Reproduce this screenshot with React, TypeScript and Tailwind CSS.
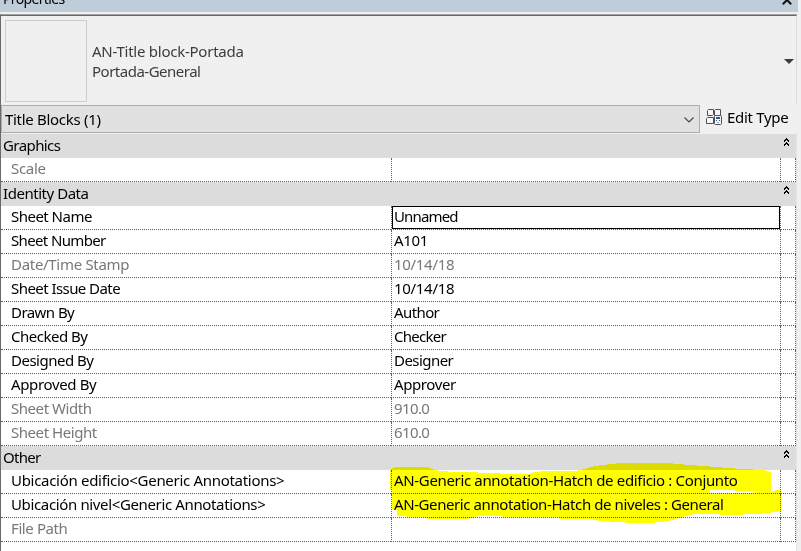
import { useState } from 'react'
import clsx from 'clsx'

type Property = {
  name: string;
  value?: string;
  muted?: boolean;
  nameClass?: string;
  valueClass?: string;
};

type Group = { title: string; titleClass?: string; items: Property[] };

const groups: Group[] = [
  {
    title: 'Graphics',
    titleClass: 'tracking-[-0.58px]',
    items: [{ name: 'Scale', muted: true }],
  },
  {
    title: 'Identity Data',
    titleClass: 'tracking-[-0.46px]',
    items: [
      { name: 'Sheet Name', value: 'Unnamed', nameClass: 'tracking-[-0.52px]', valueClass: 'tracking-[-0.85px]' },
      { name: 'Sheet Number', value: 'A101', nameClass: 'tracking-[-0.64px]' },
      { name: 'Date/Time Stamp', value: '10/14/18', muted: true },
      { name: 'Sheet Issue Date', value: '10/14/18', nameClass: 'tracking-[-0.56px]' },
      { name: 'Drawn By', value: 'Author', nameClass: 'tracking-[-0.55px]', valueClass: 'tracking-[-0.6px]' },
      { name: 'Checked By', value: 'Checker', nameClass: 'tracking-[-0.5px]', valueClass: 'tracking-[-0.75px]' },
      { name: 'Designed By', value: 'Designer', nameClass: 'tracking-[-0.5px]', valueClass: 'tracking-[-0.55px]' },
      { name: 'Approved By', value: 'Approver', nameClass: 'tracking-[-0.36px]', valueClass: 'tracking-[-0.4px]' },
      { name: 'Sheet Width', value: '910.0', muted: true, nameClass: 'tracking-[-0.45px]', valueClass: 'tracking-[-0.6px]' },
      { name: 'Sheet Height', value: '610.0', muted: true, nameClass: 'tracking-[-0.45px]', valueClass: 'tracking-[-0.6px]' },
    ],
  },
  {
    title: 'Other',
    titleClass: 'tracking-[-0.7px]',
    items: [
      {
        name: 'Ubicación edificio<Generic Annotations>',
        value: 'AN-Generic annotation-Hatch de edificio : Conjunto',
        valueClass: 'tracking-[-0.34px]',
      },
      {
        name: 'Ubicación nivel<Generic Annotations>',
        value: 'AN-Generic annotation-Hatch de niveles : General',
        nameClass: 'tracking-[-0.36px]',
        valueClass: 'tracking-[-0.41px]',
      },
      { name: 'File Path', muted: true, nameClass: 'tracking-[-0.4px]' },
    ],
  },
];

export default function App() {
  const [selected, setSelected] = useState('Sheet Name');

  return (
    <div className="relative flex h-[551px] w-[801px] flex-col overflow-hidden bg-[#f0f0f0] font-['Noto_Sans',sans-serif] text-[15px] leading-[24px] tracking-[-0.3px] text-black">
      <div className="flex h-3 w-[798px] shrink-0 items-end justify-between overflow-hidden bg-[#bfcddb]">
        <span className="mb-px ml-[3px] text-[14px] tracking-[-0.65px]">Properties</span>
        <svg className="mr-[6px] mb-[7px] shrink-0" width="10" height="10" viewBox="0 0 10 10" stroke="#111" strokeWidth="2">
          <path d="M0.8 0.8 9.2 9.2M9.2 0.8 0.8 9.2" />
        </svg>
      </div>
      <div className="mt-[2px] flex min-h-0 w-[797px] flex-1 flex-col border-t border-l border-t-[#a0a0a0] border-l-[#696969]">
        <TypeSelector />
        <div className="flex h-[29px] shrink-0">
          <div className="flex h-[28px] w-[699px] items-center justify-between border border-[#adadad] bg-[#e1e1e1] pr-[5px] pl-[3px]">
            <span>Title Blocks (1)</span>
            <svg className="mt-px" width="10" height="6" viewBox="0 0 10 6" fill="none" stroke="#444" strokeWidth="1.1">
              <path d="M0.5 0.5 5 5 9.5 0.5" />
            </svg>
          </div>
          <button className="flex h-[24px] items-center pl-[6px]">
            <EditTypeIcon />
            <span className="ml-[5px]">Edit Type</span>
          </button>
        </div>
        <div className="flex flex-1 flex-col border-r border-[#e3e3e3] bg-white">
          {groups.map((g) => (
            <div key={g.title}>
              <div className="flex h-6 justify-between bg-[#dcdcdc] pr-[7px] pl-[2px] leading-[22px]">
                <span className={g.titleClass}>{g.title}</span>
                <CollapseIcon />
              </div>
              {g.items.map((p) => (
                <PropertyRow key={p.name} item={p} selected={p.name === selected} onSelect={() => setSelected(p.name)} />
              ))}
            </div>
          ))}
        </div>
      </div>
      <Highlight />
    </div>
  );
}

function TypeSelector() {
  return (
    <div className="flex h-[90px] shrink-0 items-start border-t border-r border-t-[#696969] border-r-[#dcdcdc] text-[#3c3c3c]">
      <div className="mt-[4px] ml-[4px] h-[82px] w-[82px] border border-[#cdcdcd]" />
      <div className="mt-[25px] ml-[5px] leading-5">
        <div className="tracking-[-0.25px]">AN-Title block-Portada</div>
        <div className="tracking-[-0.5px]">Portada-General</div>
      </div>
      <svg className="mt-[43px] mr-[2px] ml-auto" width="10" height="5" viewBox="0 0 10 5" fill="#3c3c3c">
        <path d="M0 0H10L5 5Z" />
      </svg>
    </div>
  );
}

function PropertyRow({ item, selected, onSelect }: { item: Property; selected: boolean; onSelect: () => void }) {
  return (
    <div className={clsx('flex h-6 leading-[21px]', item.muted && 'text-[#787878]')} onClick={onSelect}>
      <div className="w-[390px] border-b border-dotted border-[#606060] pl-[10px]">
        <span className={item.nameClass}>{item.name}</span>
      </div>
      <div className="w-[389px] border-b border-l border-dotted border-[#606060]">
        <div className={clsx('h-[23px]', selected ? 'border border-black pl-px leading-[19px]' : 'pl-[2px]')}>
          <span className={item.valueClass}>{item.value}</span>
        </div>
      </div>
      <div className="flex-1 border-x border-b border-dotted border-[#606060]" />
    </div>
  );
}

function CollapseIcon() {
  return (
    <svg className="mt-[4px]" width="5" height="8" viewBox="0 0 5 8" shapeRendering="crispEdges">
      <path d="M2 0H3V1H4V2H5V4H4V3H3V2H2V3H1V4H0V2H1V1H2ZM2 4H3V5H4V6H5V8H4V7H3V6H2V7H1V8H0V6H1V5H2Z" />
    </svg>
  );
}

function EditTypeIcon() {
  return (
    <svg width="16" height="16" viewBox="0 0 16 16" fill="#f6f6f6" stroke="#4a525c" strokeWidth="1">
      <path d="M2.5 0.5H7.5V5.5L6.5 6.5H1.5V1.5ZM9.5 0.5H14.5V6.5H8.5V1.5ZM1.5 8.5H7.5V14.5H0.5V9.5Z" />
      <rect x="8.5" y="6.5" width="7" height="9" rx="1" />
      <path d="M10 9H14" stroke="#1d5fae" strokeWidth="2" />
      <path d="M10 11.5H11M13 11.5H14M11.5 13.5H12.5" />
    </svg>
  );
}

// marker strokes over the two annotation values
function Highlight() {
  return (
    <svg className="pointer-events-none absolute top-[460px] left-[388px] mix-blend-multiply" width="396" height="66" viewBox="388 460 396 66" fill="#ffff00" shapeRendering="crispEdges">
      <path d="M390 470 395 467H428L432 469 440 471 455 472 478 472.5 500 473.5H530L535 472 545 471H575L583 469.5 590 467 602 465 620 463H667L690 465 710 466.5 741 469 764 470 771 472V491L744 491 726 490 710 489.5V493H749L764 491.5 781 490V511L775 512 758 514 727 515 705 513.5H695L680 518 668 521 650 523 625 522.5 601 521 590 519H560L558 516.5H540L520 517H505L495 515.5H482L470 518.5 430 519 425 517.5 397 516V509H392V490H390Z" />
    </svg>
  );
}
